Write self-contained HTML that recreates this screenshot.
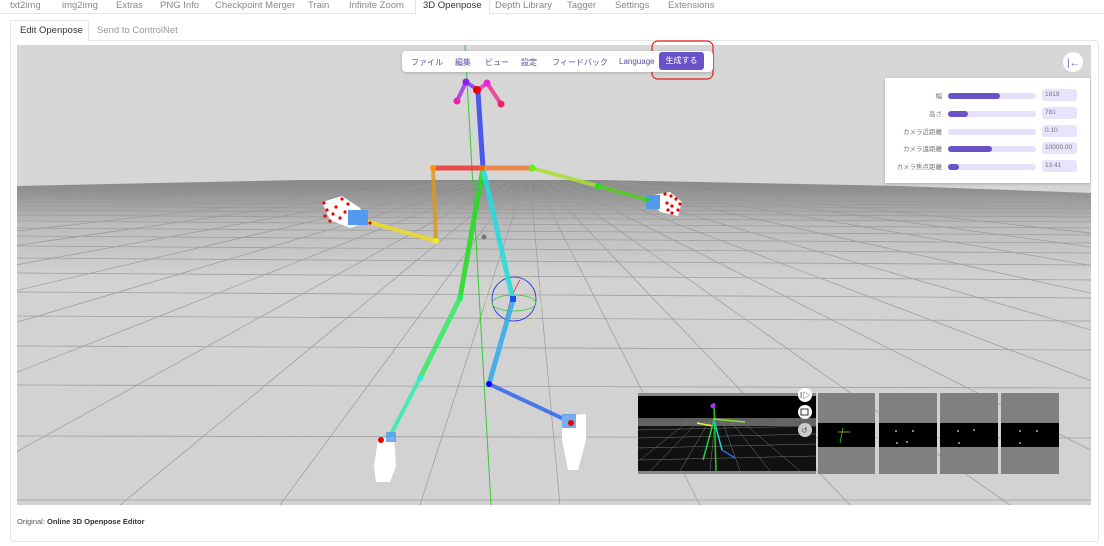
<!DOCTYPE html>
<html><head><meta charset="utf-8"><style>
body{margin:0;width:1104px;height:546px;background:#fff;font-family:"Liberation Sans","Noto Sans CJK JP",sans-serif;overflow:hidden;position:relative}
.tabs{position:absolute;top:0;left:0;height:13px;width:1104px;border-bottom:1px solid #e5e5e5}
.tab{position:absolute;top:0;font-size:9.5px;color:#888;line-height:11px}
.act{background:#fff;border:1px solid #e5e5e5;border-top:none;border-bottom:1px solid #fff;height:13px;color:#333;padding:0 7px}
.panel{position:absolute;left:10px;top:40px;width:1087px;height:500px;border:1px solid #e5e5e5;border-radius:4px}
.sub{position:absolute;top:20px;font-size:9.5px;color:#999}
.menu{position:absolute;left:402px;top:51px;width:311px;height:21px;background:#fff;border-radius:4px;box-shadow:0 1px 3px rgba(0,0,0,.2)}
.mi{position:absolute;top:6px;font-size:8px;color:#5b4aa8}
.btn{position:absolute;left:257px;top:1px;width:45px;height:18px;background:#6a52c8;border-radius:3px;color:#fff;font-size:8px;text-align:center;line-height:18px}
.rp{position:absolute;left:885px;top:78px;width:205px;height:105px;background:#fff;box-shadow:0 1px 3px rgba(0,0,0,.2)}
.row{position:absolute;left:0;width:205px;height:12px}
.lb{position:absolute;right:148px;top:1px;font-size:6.5px;color:#777;white-space:nowrap}
.tr{position:absolute;left:63px;top:4px;width:88px;height:6px;background:#e6e0fb;border-radius:3px}
.fl{height:6px;background:#6a52c8;border-radius:3px}
.in{position:absolute;left:157px;top:0;width:35px;height:12px;background:#e8e4fb;border-radius:3px;font-size:6.5px;color:#777;line-height:12px;padding-left:3px;box-sizing:border-box}
</style></head><body>
<div class="tabs">
<span class="tab" style="left:10px">txt2img</span>
<span class="tab" style="left:62px">img2img</span>
<span class="tab" style="left:116px">Extras</span>
<span class="tab" style="left:160px">PNG Info</span>
<span class="tab" style="left:215px">Checkpoint Merger</span>
<span class="tab" style="left:308px">Train</span>
<span class="tab" style="left:349px">Infinite Zoom</span>
<span class="tab act" style="left:415px">3D Openpose</span>
<span class="tab" style="left:495px">Depth Library</span>
<span class="tab" style="left:567px">Tagger</span>
<span class="tab" style="left:615px">Settings</span>
<span class="tab" style="left:668px">Extensions</span>
</div>
<div style="position:absolute;left:10px;top:20px;width:77px;height:20px;border:1px solid #e5e5e5;border-bottom:1px solid #fff;border-radius:3px 3px 0 0;background:#fff;z-index:2"></div>
<span class="sub" style="left:20px;top:25px;color:#333;z-index:3">Edit Openpose</span>
<span class="sub" style="left:97px;top:25px">Send to ControlNet</span>
<div class="panel"></div>
<svg style="position:absolute;left:0;top:0" width="1104" height="546">
<defs>
<linearGradient id="fl" x1="0" y1="180" x2="0" y2="280" gradientUnits="userSpaceOnUse">
<stop offset="0" stop-color="#8a8a8a"/><stop offset="0.1" stop-color="#8f8f8f"/><stop offset="0.45" stop-color="#bdbdbd"/><stop offset="1" stop-color="#d2d2d2"/></linearGradient>
<clipPath id="vp"><rect x="17" y="45" width="1074" height="460"/></clipPath>
</defs>
<g clip-path="url(#vp)">
<rect x="17" y="45" width="1074" height="460" fill="#d6d6d6"/>
<polygon points="17,186 300,180 600,180 900,186 1091,193 1091,505 17,505" fill="url(#fl)"/>
<g stroke="#9a9a9a" stroke-width="0.8" fill="none" opacity="0.9">
<path d="M17,196 L1091,203 M17,199 L1091,206 M17,202 L1091,209 M17,206 L1091,213 M17,210 L1091,217 M17,215 L1091,222 M17,221 L1091,228 M17,228 L1091,235 M17,236 L1091,243 M17,246 L1091,253 M17,258 L1091,265 M17,273 L1091,280 M17,292 L1091,298 M17,316 L1091,321 M17,346 L1091,350 M17,385 L1091,388 M17,436 L1091,438 M17,500 L1091,500"/>
<path d="M-900,505 L480,182 M-600,505 L490,182 M-320,505 L500,182 M-80,505 L505,182 M120,505 L512,182 M280,505 L518,182 M420,505 L524,182 M560,505 L530,182 M700,505 L536,182 M850,505 L542,182 M1010,505 L550,182 M1200,505 L558,182 M1420,505 L566,182 M1700,505 L576,182 M2050,505 L588,182 M-1300,505 L470,182 M-1800,505 L460,182 M2500,505 L600,182 M3000,505 L610,182 M-2400,505 L450,182 M3600,505 L620,182"/>
</g>
<line x1="465" y1="45" x2="491" y2="505" stroke="#3c3" stroke-width="1"/>
<circle cx="514" cy="299" r="22" fill="none" stroke="#2233cc" stroke-width="0.8"/>
<circle cx="514" cy="299" r="28" fill="none" stroke="#e4e0a0" stroke-width="0.6"/>
<ellipse cx="514" cy="303" rx="22" ry="8" fill="none" stroke="#3c3" stroke-width="0.8"/>
<path d="M520,280 Q508,300 506,322" stroke="#e33" stroke-width="0.8" fill="none"/>
<g stroke-linecap="round" opacity="0.85">
<line x1="478" y1="92" x2="483" y2="168" stroke="#3344ee" stroke-width="5"/>
<line x1="466" y1="82" x2="478" y2="90" stroke="#8833ee" stroke-width="4"/>
<line x1="466" y1="82" x2="457" y2="101" stroke="#aa33ee" stroke-width="4"/>
<line x1="487" y1="83" x2="478" y2="90" stroke="#ee33cc" stroke-width="4"/>
<line x1="487" y1="83" x2="501" y2="104" stroke="#ee3388" stroke-width="4"/>
<line x1="433" y1="168" x2="483" y2="168" stroke="#ee3333" stroke-width="5"/>
<line x1="483" y1="168" x2="532" y2="168" stroke="#ee7733" stroke-width="5"/>
<line x1="433" y1="168" x2="436" y2="241" stroke="#dd9922" stroke-width="4"/>
<line x1="436" y1="241" x2="369" y2="222" stroke="#eedd22" stroke-width="4"/>
<line x1="532" y1="168" x2="598" y2="186" stroke="#aae033" stroke-width="4"/>
<line x1="598" y1="186" x2="648" y2="200" stroke="#55cc22" stroke-width="4"/>
<line x1="483" y1="168" x2="460" y2="298" stroke="#22dd22" stroke-width="5"/>
<line x1="483" y1="168" x2="513" y2="300" stroke="#22dddd" stroke-width="5"/>
<line x1="460" y1="298" x2="420" y2="378" stroke="#33ee66" stroke-width="5"/>
<line x1="420" y1="378" x2="390" y2="436" stroke="#33eeaa" stroke-width="4"/>
<line x1="513" y1="300" x2="489" y2="384" stroke="#33aaee" stroke-width="5"/>
<line x1="489" y1="384" x2="566" y2="420" stroke="#3366ee" stroke-width="4"/>
</g>
<circle cx="466" cy="82" r="3.5" fill="#8822ee"/><circle cx="487" cy="83" r="3.5" fill="#ee22dd"/>
<circle cx="457" cy="101" r="3.5" fill="#ee22aa"/><circle cx="501" cy="104" r="3.5" fill="#ee2266"/>
<circle cx="477" cy="90" r="4" fill="#ee0000"/>
<circle cx="433" cy="168" r="3" fill="#f90"/><circle cx="482" cy="168" r="3" fill="#f60"/>
<circle cx="532" cy="168" r="3.5" fill="#6e2"/><circle cx="598" cy="186" r="3" fill="#2d2"/>
<circle cx="436" cy="241" r="3" fill="#ee2"/><circle cx="484" cy="237" r="2.5" fill="#777"/>
<circle cx="460" cy="298" r="3" fill="#2e6"/><circle cx="420" cy="378" r="3" fill="#2ed"/>
<rect x="510" y="296" width="6" height="6" fill="#1155ee"/>
<circle cx="489" cy="384" r="3" fill="#00e"/>
<g>
<path d="M322,202 L342,196 L360,208 L368,222 L350,228 L330,220 Z" fill="#fff"/>
<rect x="348" y="210" width="20" height="15" fill="#5599ee"/>
<g fill="#e00"><circle cx="324" cy="203" r="1.6"/><circle cx="327" cy="210" r="1.6"/><circle cx="325" cy="216" r="1.6"/><circle cx="330" cy="221" r="1.6"/><circle cx="336" cy="207" r="1.6"/><circle cx="333" cy="214" r="1.6"/><circle cx="342" cy="199" r="1.6"/><circle cx="348" cy="204" r="1.6"/><circle cx="340" cy="218" r="1.6"/><circle cx="345" cy="212" r="1.6"/><circle cx="370" cy="223" r="1.6"/></g>
<path d="M648,196 L670,192 L682,202 L678,216 L660,212 Z" fill="#fff"/>
<rect x="646" y="195" width="14" height="14" fill="#5599ee"/>
<g fill="#e00"><circle cx="665" cy="194" r="1.6"/><circle cx="671" cy="196" r="1.6"/><circle cx="676" cy="199" r="1.6"/><circle cx="680" cy="204" r="1.6"/><circle cx="678" cy="210" r="1.6"/><circle cx="672" cy="213" r="1.6"/><circle cx="667" cy="203" r="1.6"/><circle cx="672" cy="206" r="1.6"/><circle cx="668" cy="210" r="1.6"/></g>
<circle cx="647" cy="200" r="2.5" fill="#3c3"/>
</g>
<path d="M378,440 L394,436 L396,466 L390,482 L376,482 L374,466 Z" fill="#fff"/>
<rect x="386" y="432" width="10" height="10" fill="#5599ee" opacity="0.8"/>
<circle cx="381" cy="440" r="3" fill="#e00"/>
<path d="M562,416 L586,414 L586,440 L578,470 L568,470 L562,440 Z" fill="#fff"/>
<rect x="562" y="414" width="14" height="14" fill="#5599ee" opacity="0.8"/>
<circle cx="571" cy="423" r="3" fill="#e00"/>
<rect x="638" y="393" width="178" height="81" fill="#888"/>
<rect x="638" y="396" width="178" height="26" fill="#000"/>
<polygon points="638,422 816,418 816,471 638,471" fill="#111"/>
<g stroke="#777" stroke-width="0.5"><path d="M638,430 L816,426 M638,438 L816,434 M638,448 L816,444 M638,460 L816,456 M650,471 L700,420 M680,471 L710,420 M710,471 L715,420 M740,471 L722,420 M770,471 L730,420 M800,471 L740,420 M640,460 L690,420"/></g>
<rect x="638" y="418" width="178" height="8" fill="#888" opacity="0.7"/>
<g stroke-width="1.5"><line x1="714" y1="403" x2="716" y2="471" stroke="#2c2"/><line x1="697" y1="423" x2="713" y2="426" stroke="#ee3"/><line x1="713" y1="419" x2="745" y2="422" stroke="#8d3"/><line x1="714" y1="420" x2="722" y2="450" stroke="#2cc"/><line x1="714" y1="420" x2="703" y2="460" stroke="#2c4"/><line x1="722" y1="450" x2="735" y2="458" stroke="#36e"/></g>
<circle cx="713" cy="406" r="2.5" fill="#a3e"/>
<rect x="818" y="393" width="57" height="81" fill="#808080"/><rect x="818" y="423" width="57" height="24" fill="#000"/>
<rect x="879" y="393" width="58" height="81" fill="#808080"/><rect x="879" y="423" width="58" height="24" fill="#000"/>
<rect x="940" y="393" width="58" height="81" fill="#808080"/><rect x="940" y="423" width="58" height="24" fill="#000"/>
<rect x="1001" y="393" width="58" height="81" fill="#808080"/><rect x="1001" y="423" width="58" height="24" fill="#000"/>
<g stroke-width="0.8"><line x1="843" y1="428" x2="840" y2="443" stroke="#2c2"/><line x1="838" y1="432" x2="850" y2="432" stroke="#ca3"/></g>
<g fill="#aac"><circle cx="896" cy="431" r="1"/><circle cx="913" cy="431" r="1"/><circle cx="897" cy="443" r="1"/><circle cx="907" cy="442" r="1"/><circle cx="958" cy="431" r="1"/><circle cx="974" cy="430" r="1"/><circle cx="959" cy="443" r="1"/><circle cx="1020" cy="431" r="1"/><circle cx="1037" cy="431" r="1"/><circle cx="1020" cy="443" r="1"/></g>
<circle cx="805" cy="395" r="7" fill="#fff"/><circle cx="805" cy="412" r="7" fill="#fff"/><circle cx="805" cy="430" r="7" fill="#ccc"/>
<text x="800" y="398" font-size="8" fill="#333">I▷</text><rect x="801" y="409" width="7" height="6" fill="none" stroke="#333" stroke-width="1"/><text x="801" y="433" font-size="8" fill="#555">↺</text>
<circle cx="1073" cy="62" r="10" fill="#fff"/>
<text x="1067" y="66" font-size="10" fill="#6a52c8">|←</text>
</g>
<rect x="652" y="41" width="61" height="38" rx="6" fill="none" stroke="#e02020" stroke-width="1.2"/>
</svg>
<div class="menu">
<span class="mi" style="left:9px">ファイル</span>
<span class="mi" style="left:53px">編集</span>
<span class="mi" style="left:83px">ビュー</span>
<span class="mi" style="left:119px">設定</span>
<span class="mi" style="left:150px">フィードバック</span>
<span class="mi" style="left:217px">Language</span>
<div class="btn">生成する</div>
</div>
<div class="rp">
<div class="row" style="top:11px"><span class="lb">幅</span><div class="tr"><div class="fl" style="width:52px"></div></div><div class="in">1819</div></div>
<div class="row" style="top:29px"><span class="lb">高さ</span><div class="tr"><div class="fl" style="width:20px"></div></div><div class="in">781</div></div>
<div class="row" style="top:47px"><span class="lb">カメラ近距離</span><div class="tr"></div><div class="in">0.10</div></div>
<div class="row" style="top:64px"><span class="lb">カメラ遠距離</span><div class="tr"><div class="fl" style="width:44px"></div></div><div class="in">10000.00</div></div>
<div class="row" style="top:82px"><span class="lb">カメラ焦点距離</span><div class="tr"><div class="fl" style="width:11px"></div></div><div class="in">13.41</div></div>
</div>
<div style="position:absolute;left:17px;top:517px;font-size:7.5px;color:#555">Original: <b style="color:#333">Online 3D Openpose Editor</b></div>
</body></html>
